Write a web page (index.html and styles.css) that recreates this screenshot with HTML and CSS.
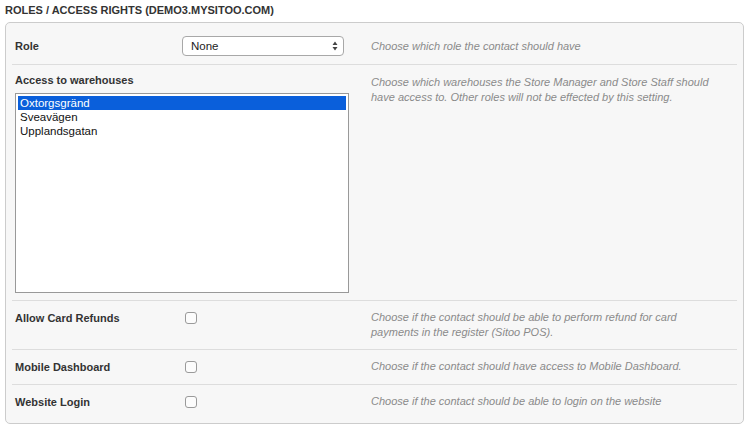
FILE: index.html
```html
<!DOCTYPE html>
<html>
<head>
<meta charset="utf-8">
<link rel="stylesheet" href="styles.css">
</head>
<body>
<h2 class="title">Roles / Access rights (demo3.mysitoo.com)</h2>
<div class="panel">
  <div class="row row-role">
    <div class="label">Role</div>
    <div class="control">
      <div class="select">
        <span>None</span>
        <svg class="arrows" width="6" height="10" viewBox="0 0 6 10"><path d="M3 0.5 L5.5 4 L0.5 4 Z M3 9.5 L5.5 6 L0.5 6 Z" fill="#444"/></svg>
      </div>
    </div>
    <div class="desc">Choose which role the contact should have</div>
  </div>
  <div class="row row-access">
    <div class="wide">
      <div class="label">Access to warehouses</div>
      <div class="listbox">
        <div class="opt selected">Oxtorgsgränd</div>
        <div class="opt">Sveavägen</div>
        <div class="opt">Upplandsgatan</div>
      </div>
    </div>
    <div class="desc">Choose which warehouses the Store Manager and Store Staff should have access to. Other roles will not be effected by this setting.</div>
  </div>
  <div class="row">
    <div class="label">Allow Card Refunds</div>
    <div class="control"><span class="check"></span></div>
    <div class="desc">Choose if the contact should be able to perform refund for card payments in the register (Sitoo POS).</div>
  </div>
  <div class="row">
    <div class="label">Mobile Dashboard</div>
    <div class="control"><span class="check"></span></div>
    <div class="desc">Choose if the contact should have access to Mobile Dashboard.</div>
  </div>
  <div class="row">
    <div class="label">Website Login</div>
    <div class="control"><span class="check"></span></div>
    <div class="desc">Choose if the contact should be able to login on the website</div>
  </div>
</div>
</body>
</html>
```
FILE: styles.css
```css
html, body {
  margin: 0;
  padding: 0;
  background: #ffffff;
}
body {
  font-family: "Liberation Sans", Arial, Helvetica, sans-serif;
  color: #333333;
  padding: 4px 7px 0 5px;
}
.title {
  margin: 0 0 5px 0;
  font-size: 11px;
  line-height: 13px;
  font-weight: bold;
  text-transform: uppercase;
  color: #333333;
}
.panel {
  background: #f7f7f7;
  border: 1px solid #cccccc;
  border-radius: 5px;
  padding: 4px 6px 4px 6px;
}
.row {
  display: flex;
  align-items: flex-start;
  padding: 9px 0 9px 3px;
  border-bottom: 1px solid #dddddd;
  line-height: 16px;
}
.row:last-child {
  border-bottom: none;
}
.row-role {
  align-items: center;
  padding-bottom: 8px;
}
.row-access {
  padding-top: 7px;
  padding-bottom: 7px;
}
.row-access .desc {
  padding-top: 3px;
}
.label {
  width: 167px;
  flex: none;
  font-size: 11px;
  font-weight: bold;
  color: #333333;
}
.control {
  width: 167px;
  flex: none;
  display: flex;
  align-items: center;
  min-height: 16px;
}
.wide {
  width: 334px;
  flex: none;
  display: flex;
  flex-direction: column;
  gap: 5px;
}
.desc {
  margin-left: 22px;
  font-size: 11px;
  line-height: 15px;
  font-style: italic;
  color: #8a8a8a;
  max-width: 350px;
}
.select {
  box-sizing: border-box;
  width: 162px;
  height: 20px;
  border: 1px solid #a8a8a8;
  border-radius: 4px;
  background: #ffffff;
  display: flex;
  align-items: center;
  justify-content: space-between;
  padding: 0 5px 0 8px;
  font-size: 11.5px;
  color: #222222;
}
.arrows {
  display: block;
}
.listbox {
  box-sizing: border-box;
  height: 200px;
  border: 1px solid #999999;
  background: #ffffff;
  padding: 2px;
  font-size: 11.5px;
  line-height: 14px;
  color: #111111;
}
.opt {
  padding-left: 2px;
}
.opt.selected {
  background: #0a5fdb;
  color: #ffffff;
}
.check {
  box-sizing: border-box;
  display: block;
  width: 12px;
  height: 12px;
  margin-left: 3px;
  border: 1px solid #9a9a9a;
  border-radius: 3px;
  background: #fcfcfc;
}
```
